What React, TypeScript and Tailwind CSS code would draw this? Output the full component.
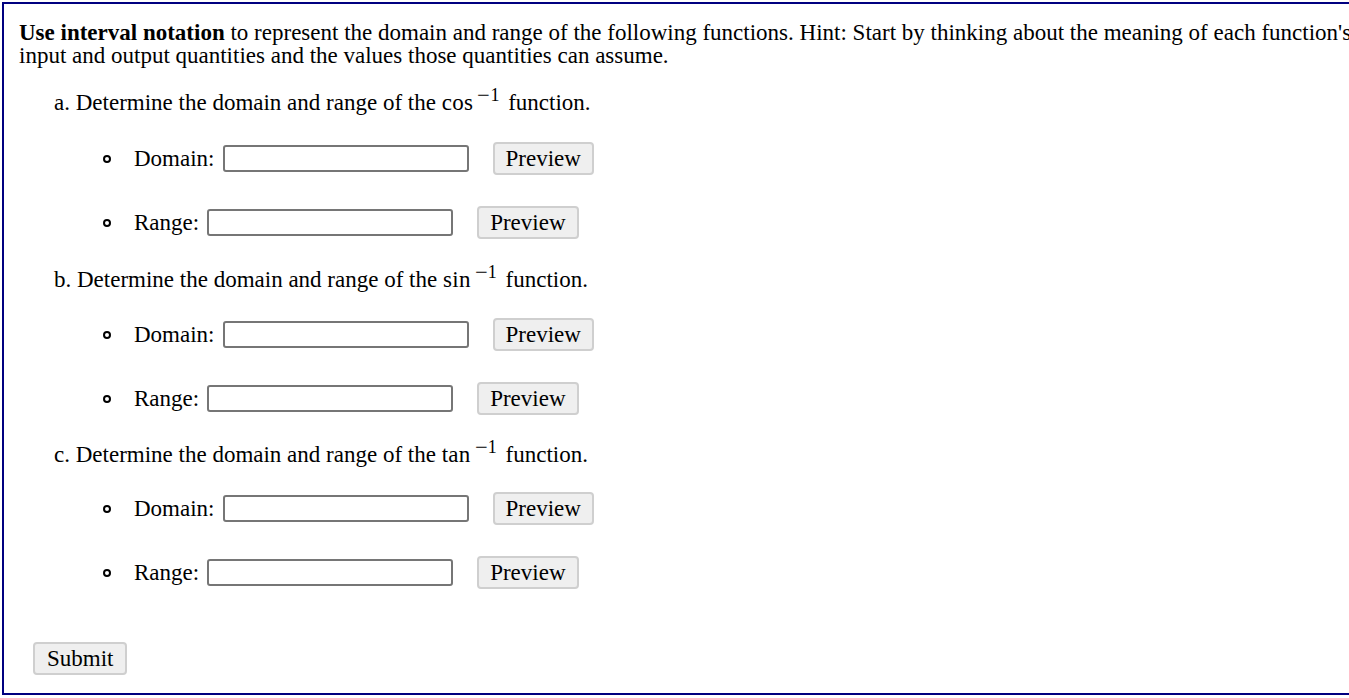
import React from "react";

const serif = { fontFamily: '"Liberation Serif", "Times New Roman", serif' };

function Fn({ name }: { name: string }) {
  return (
    <span className="inline-flex items-baseline">
      <span className="tracking-[0.3px]">{name}</span>
      <span className="ml-[4px] relative top-[-9px] text-[18px] inline-flex items-baseline">
        <span className="inline-block scale-x-125 origin-left mr-[3px]">−</span>
        <span>1</span>
      </span>
      <span className="w-[3px]" />
    </span>
  );
}

function Row({ label }: { label: string }) {
  return (
    <div className="flex items-center h-[33px] pl-[84px]">
      <span className="w-[8px] h-[8px] rounded-full border-2 border-black box-border shrink-0" />
      <span className="ml-[23px]">{label}</span>
      <input
        type="text"
        className="ml-[8px] w-[246px] h-[27px] border-2 border-[#767676] rounded-[3px] bg-white outline-none"
      />
      <button className="ml-[24px] h-[33px] px-[11px] bg-[#efefef] border-2 border-[#cfcfcf] rounded-[4px] text-black leading-[23px]">
        Preview
      </button>
    </div>
  );
}

function Section({ letter, fn, top }: { letter: string; fn: string; top: string }) {
  return (
    <div>
      <div className="pl-[35px] h-[23px] leading-[23px]">
        {letter}. Determine the domain and range of the <Fn name={fn} /> function.
      </div>
      <div className={top}>
        <Row label="Domain:" />
      </div>
      <div className="mt-[31px]">
        <Row label="Range:" />
      </div>
    </div>
  );
}

export default function App() {
  return (
    <div className="w-[1349px] h-[698px] overflow-hidden bg-white text-black" style={serif}>
      <div className="ml-[2px] mt-[2px] w-[1420px] h-[693px] border-2 border-r-0 border-[#000080] text-[23px] leading-[23px] box-border overflow-hidden">
        <div className="pl-[15px] pt-[17px] w-[1365px]">
          <p>
            <b>Use interval notation</b> to represent the domain and range of the following functions. Hint: Start by thinking about the meaning of each function's input and output quantities and the values those quantities can assume.
          </p>
          <div className="mt-[24px] flex flex-col">
            <Section letter="a" fn="cos" top="mt-[28px]" />
            <div className="mt-[29px]">
              <Section letter="b" fn="sin" top="mt-[27px]" />
            </div>
            <div className="mt-[28px]">
              <Section letter="c" fn="tan" top="mt-[26px]" />
            </div>
          </div>
          <div className="mt-[53px] pl-[14px]">
            <button className="h-[33px] px-[12px] bg-[#efefef] border-2 border-[#cfcfcf] rounded-[4px] text-black leading-[23px]">
              Submit
            </button>
          </div>
        </div>
      </div>
    </div>
  );
}
